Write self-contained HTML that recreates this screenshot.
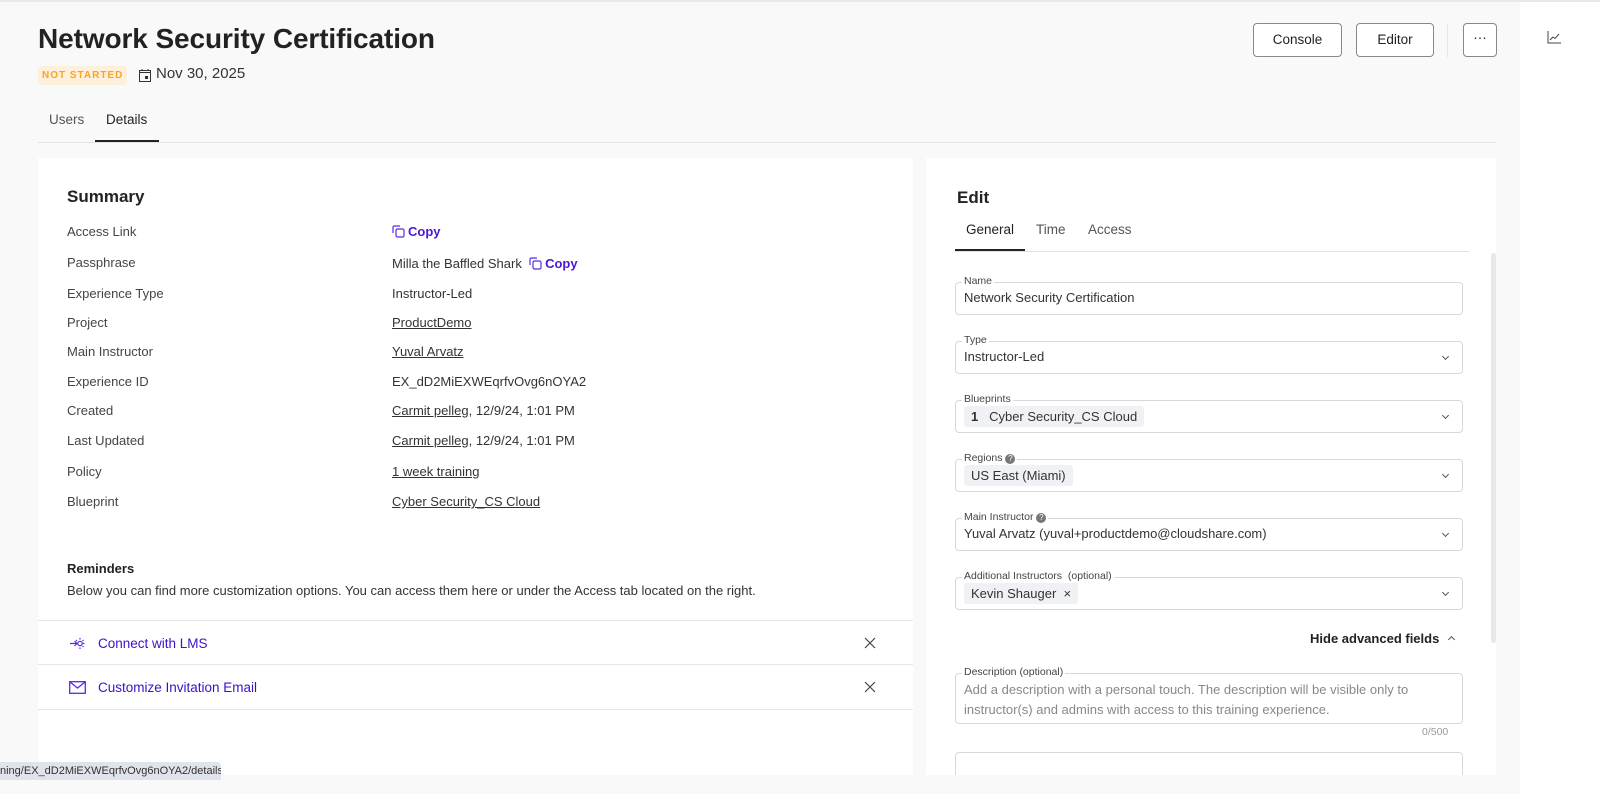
<!DOCTYPE html>
<html><head><style>
*{box-sizing:border-box;margin:0;padding:0}
body{width:1600px;height:794px;overflow:hidden;background:#f9f9f9;font-family:"Liberation Sans",sans-serif;color:#333;position:relative;font-size:13px}
.topline{position:absolute;left:0;top:0;width:1600px;height:2px;background:#e8e8e8}
.rstrip{position:absolute;left:1520px;top:2px;width:80px;height:792px;background:#fff}
h1{position:absolute;left:38px;top:23px;font-size:28px;font-weight:bold;color:#222;letter-spacing:-0.1px}
.badge{position:absolute;left:38px;top:66px;height:19px;padding:0 4px;background:#fff0dc;color:#f5a623;font-size:10px;font-weight:bold;letter-spacing:1px;line-height:19px;border-radius:3px}
.date{position:absolute;top:65px;font-size:15px;color:#333}
.tabs{position:absolute;left:38px;top:103px;width:1458px;height:40px;border-bottom:1px solid #e2e2e2}
.tab{position:absolute;top:9px;font-size:13.5px;color:#555}
.btn{position:absolute;top:23px;height:34px;border:1px solid #888;border-radius:4px;background:#fff;font-size:13.5px;text-align:center;line-height:32px;color:#222}
.panel{position:absolute;background:#fff}
.row{position:absolute;left:67px;font-size:13px;color:#444}
.val{position:absolute;left:392px;font-size:13px;color:#333}
.u{text-decoration:underline}
.copy{color:#4a17d6;font-weight:bold}
.copy svg{vertical-align:-2px;margin-right:3px}
.link{color:#3d10c9;font-size:13.5px}
.field{position:absolute;left:955px;width:508px;height:33px;border:1px solid #d8d8d8;border-radius:4px}
.lbl{position:absolute;left:6px;top:-8px;background:#fff;padding:0 2px;font-size:10.5px;color:#444}
.fv{position:absolute;left:8px;top:7px;font-size:13px;color:#333}
.chev{position:absolute;right:14px;top:12px;width:5px;height:5px;border-right:1px solid #555;border-bottom:1px solid #555;transform:rotate(45deg)}
.chip{position:absolute;left:8px;top:5px;height:21px;background:#f0f1f4;border-radius:3px;padding:0 7px;line-height:21px;font-size:13px}
</style></head><body>
<div class="topline"></div>
<div class="rstrip"></div>
<svg style="position:absolute;left:1547px;top:31px" width="14" height="13" viewBox="0 0 14 13"><path d="M1 0V12H14" stroke="#444" fill="none"/><path d="M3 9L6 6L8 7.5L12 3" stroke="#444" fill="none"/></svg>
<h1>Network Security Certification</h1>
<div class="badge">NOT STARTED</div>
<svg style="position:absolute;left:139px;top:69px" width="12" height="13" viewBox="0 0 12 13"><rect x="0.5" y="1.5" width="11" height="11" fill="none" stroke="#333"/><path d="M0.5 3.5H11.5M3 0V2M9 0V2" stroke="#333"/><rect x="6" y="7" width="3" height="3" fill="#333"/></svg>
<div class="date" style="left:156px">Nov 30, 2025</div>
<div class="tabs">
<div class="tab" style="left:11px">Users</div>
<div class="tab" style="left:68px;color:#222">Details</div>
<div style="position:absolute;left:57px;top:37px;width:64px;height:2px;background:#222"></div>
</div>
<div class="btn" style="left:1253px;width:89px">Console</div>
<div class="btn" style="left:1356px;width:78px">Editor</div>
<div style="position:absolute;left:1447px;top:24px;width:1px;height:33px;background:#e5e5e5"></div>
<div class="btn" style="left:1463px;width:34px;line-height:28px">···</div>

<div class="panel" style="left:38px;top:158px;width:875px;height:617px">
<div style="position:absolute;left:0;top:462px;width:875px;border-top:1px solid #e6e6e6"></div>
<div style="position:absolute;left:0;top:506px;width:875px;border-top:1px solid #e6e6e6"></div>
<div style="position:absolute;left:0;top:551px;width:875px;border-top:1px solid #e6e6e6"></div>
</div>
<div style="position:absolute;left:67px;top:187px;font-size:17px;font-weight:bold;color:#222">Summary</div>
<div class="row" style="top:224px">Access Link</div>
<div class="val" style="top:224px"><span class="copy"><svg width="13" height="13" viewBox="0 0 13 13" fill="none" stroke="#5a2be0" stroke-width="1.2"><path d="M1 8V2.5Q1 1 2.5 1H8"/><rect x="4" y="4" width="8" height="8" rx="1.5"/></svg>Copy</span></div>
<div class="row" style="top:255px">Passphrase</div>
<div class="val" style="top:256px">Milla the Baffled Shark &nbsp;<span class="copy"><svg width="13" height="13" viewBox="0 0 13 13" fill="none" stroke="#5a2be0" stroke-width="1.2"><path d="M1 8V2.5Q1 1 2.5 1H8"/><rect x="4" y="4" width="8" height="8" rx="1.5"/></svg>Copy</span></div>
<div class="row" style="top:286px">Experience Type</div><div class="val" style="top:286px">Instructor-Led</div>
<div class="row" style="top:315px">Project</div><div class="val u" style="top:315px">ProductDemo</div>
<div class="row" style="top:344px">Main Instructor</div><div class="val u" style="top:344px">Yuval Arvatz</div>
<div class="row" style="top:374px">Experience ID</div><div class="val" style="top:374px">EX_dD2MiEXWEqrfvOvg6nOYA2</div>
<div class="row" style="top:403px">Created</div><div class="val" style="top:403px"><span class="u">Carmit pelleg</span>, 12/9/24, 1:01 PM</div>
<div class="row" style="top:433px">Last Updated</div><div class="val" style="top:433px"><span class="u">Carmit pelleg</span>, 12/9/24, 1:01 PM</div>
<div class="row" style="top:464px">Policy</div><div class="val u" style="top:464px">1 week training</div>
<div class="row" style="top:494px">Blueprint</div><div class="val u" style="top:494px">Cyber Security_CS Cloud</div>
<div class="row" style="top:561px;font-weight:bold;color:#222">Reminders</div>
<div class="row" style="top:583px;color:#333">Below you can find more customization options. You can access them here or under the Access tab located on the right.</div>
<svg style="position:absolute;left:69px;top:635px" width="17" height="17" viewBox="0 0 17 17" fill="none" stroke="#5a2be0" stroke-width="1.2"><path d="M1 8.5H8M5.5 6L8 8.5L5.5 11"/><circle cx="11" cy="8.5" r="2.2"/><path d="M11 3V4.5M11 12.5V14M15.5 8.5H14M7 5L8 6M14.5 5L13.5 6M14.5 12L13.5 11"/></svg>
<div class="link" style="position:absolute;left:98px;top:636px">Connect with LMS</div>
<svg style="position:absolute;left:69px;top:681px" width="17" height="13" viewBox="0 0 17 13" fill="none" stroke="#5a2be0" stroke-width="1.3"><rect x="0.7" y="0.7" width="15.6" height="11.6"/><path d="M1 1L8.5 7L16 1"/></svg>
<div class="link" style="position:absolute;left:98px;top:680px">Customize Invitation Email</div>
<svg style="position:absolute;left:864px;top:637px" width="12" height="12" viewBox="0 0 12 12" stroke="#444" stroke-width="1.2"><path d="M1 1L11 11M11 1L1 11"/></svg>
<svg style="position:absolute;left:864px;top:681px" width="12" height="12" viewBox="0 0 12 12" stroke="#444" stroke-width="1.2"><path d="M1 1L11 11M11 1L1 11"/></svg>

<div class="panel" style="left:926px;top:158px;width:570px;height:617px"></div>
<div style="position:absolute;left:957px;top:188px;font-size:17px;font-weight:bold;color:#222">Edit</div>
<div style="position:absolute;left:955px;top:251px;width:514px;border-top:1px solid #e2e2e2"></div>
<div style="position:absolute;left:966px;top:222px;font-size:13.5px;color:#222">General</div>
<div style="position:absolute;left:955px;top:249px;width:70px;height:2px;background:#222"></div>
<div style="position:absolute;left:1036px;top:222px;font-size:13.5px;color:#555">Time</div>
<div style="position:absolute;left:1088px;top:222px;font-size:13.5px;color:#555">Access</div>
<div style="position:absolute;left:1491px;top:253px;width:5px;height:390px;background:#e8e8e8;border-radius:3px"></div>

<div class="field" style="top:282px"><div class="lbl">Name</div><div class="fv">Network Security Certification</div></div>
<div class="field" style="top:341px"><div class="lbl">Type</div><div class="fv">Instructor-Led</div><div class="chev"></div></div>
<div class="field" style="top:400px"><div class="lbl">Blueprints</div><div class="chip"><b style="font-weight:bold">1</b>&nbsp;&nbsp; Cyber Security_CS Cloud</div><div class="chev"></div></div>
<div class="field" style="top:459px"><div class="lbl">Regions <span style="display:inline-block;width:10px;height:10px;border-radius:50%;background:#777;color:#fff;font-size:8px;text-align:center;line-height:10px">?</span></div><div class="chip">US East (Miami)</div><div class="chev"></div></div>
<div class="field" style="top:518px"><div class="lbl">Main Instructor <span style="display:inline-block;width:10px;height:10px;border-radius:50%;background:#777;color:#fff;font-size:8px;text-align:center;line-height:10px">?</span></div><div class="fv">Yuval Arvatz (yuval+productdemo@cloudshare.com)</div><div class="chev"></div></div>
<div class="field" style="top:577px"><div class="lbl">Additional Instructors &nbsp;(optional)</div><div class="chip">Kevin Shauger &nbsp;×</div><div class="chev"></div></div>
<div style="position:absolute;left:1310px;top:631px;font-size:13px;font-weight:bold;color:#222">Hide advanced fields <span style="display:inline-block;width:5px;height:5px;border-left:1px solid #555;border-top:1px solid #555;transform:rotate(45deg);margin-left:6px;vertical-align:1px"></span></div>
<div class="field" style="top:673px;height:51px"><div class="lbl">Description (optional)</div><div style="position:absolute;left:8px;top:6px;font-size:13px;line-height:20px;color:#888;width:490px">Add a description with a personal touch. The description will be visible only to instructor(s) and admins with access to this training experience.</div></div>
<div style="position:absolute;left:1422px;top:726px;font-size:10.5px;color:#999">0/500</div>
<div class="field" style="top:752px;height:40px;border-bottom:none"></div>
<div style="position:absolute;left:0;top:775px;width:1520px;height:19px;background:#f9f9f9"></div>
<div style="position:absolute;left:0;top:762px;width:221px;height:18px;background:#dfe3ea;border-radius:0 4px 0 0;font-size:11px;line-height:18px;color:#333;white-space:nowrap;overflow:hidden">ning/EX_dD2MiEXWEqrfvOvg6nOYA2/details</div>
</body></html>
